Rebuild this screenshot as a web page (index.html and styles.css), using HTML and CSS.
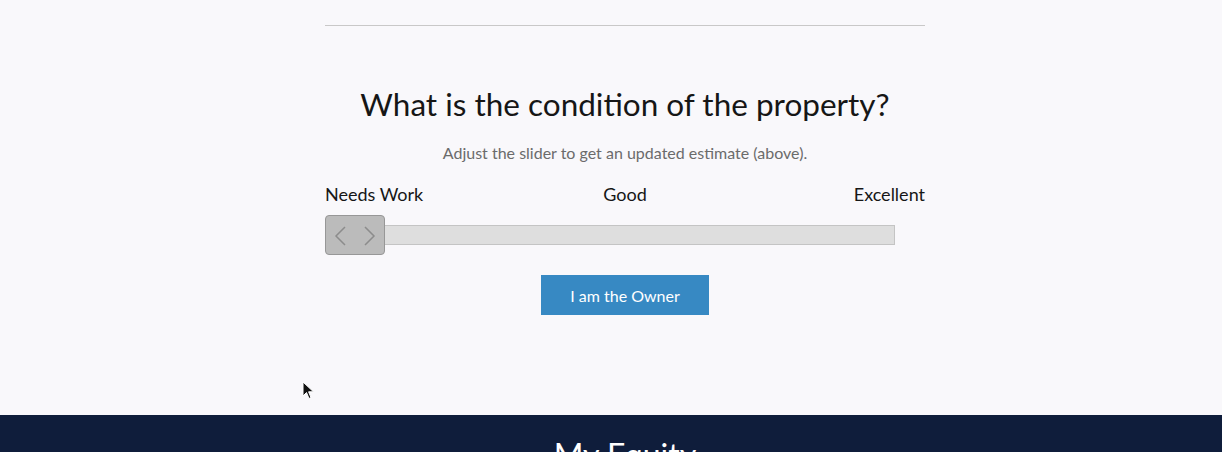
FILE: index.html
```html
<!DOCTYPE html>
<html>
<head>
	<title>Property condition</title>
	<link rel="stylesheet" href="styles.css">
</head>
<body>
	<div class="page">
		<div class="step">
			<hr class="divider">
			<h1>What is the condition of the property?</h1>
			<p class="hint">Adjust the slider to get an updated estimate (above).</p>
			<div class="labels">
				<span class="left">Needs Work</span>
				<span class="mid">Good</span>
				<span class="right">Excellent</span>
			</div>
			<div class="slider">
				<div class="track"></div>
				<div class="handle">
					<svg width="58" height="38" viewBox="0 0 58 38">
						<path d="M19 11 L10 20 L19 29" fill="none" stroke="#8c8c8c" stroke-width="1.5"/>
						<path d="M39 11 L48 20 L39 29" fill="none" stroke="#8c8c8c" stroke-width="1.5"/>
					</svg>
				</div>
			</div>
			<div class="actions">
				<button class="owner">I am the Owner</button>
			</div>
		</div>
	</div>
	<div class="footer">
		<h2>My Equity</h2>
	</div>
	<svg class="cursor" width="14" height="20" viewBox="0 0 14 20">
		<path d="M1 1 L1 15 L4.5 11.5 L7 17.5 L9 16.6 L6.6 10.8 L11.5 10.8 Z" fill="#111" stroke="#fff" stroke-width="1"/>
	</svg>
</body>
</html>
```

FILE: styles.css
```css
body {
	margin: 0;
	background-color: #f9f8fb;
	font-family: Lato, "Open Sans", sans-serif;
	overflow: hidden;
	height: 452px;
}

.page {
	padding-left: 28px;
	height: 415px;
}

.step {
	width: 600px;
	margin: 0 auto;
	padding-top: 25px;
}

.divider {
	border: none;
	border-top: 1px solid #c9c8c8;
	margin: 0;
}

h1 {
	font-weight: normal;
	font-size: 31.5px;
	color: #161616;
	text-align: center;
	margin: 0;
	padding-top: 58px;
	line-height: 40px;
}

.hint {
	text-align: center;
	color: #6b6b6b;
	font-size: 16px;
	margin: 0;
	padding-top: 19px;
	line-height: 20px;
}

.labels {
	display: grid;
	grid-template-columns: 1fr auto 1fr;
	font-size: 18px;
	color: #161616;
	padding-top: 20px;
	line-height: 22px;
}

.labels .right {
	text-align: right;
}

.slider {
	position: relative;
	margin-top: 10px;
	height: 40px;
	width: 570px;
	display: flex;
	align-items: center;
}

.track {
	flex: 1;
	height: 18px;
	background: #dedede;
	border: 1px solid #c4c4c4;
}

.handle {
	position: absolute;
	left: 0;
	top: 0;
	width: 58px;
	height: 38px;
	background: #bbbbbb;
	border: 1px solid #979797;
	border-radius: 4px;
}

.handle svg {
	display: block;
}

.actions {
	text-align: center;
	padding-top: 20px;
}

.owner {
	border: none;
	background: #3789c3;
	color: #fff;
	font-family: Lato, sans-serif;
	font-size: 16px;
	width: 168px;
	height: 40px;
	padding: 0;
}

.footer {
	background: #0f1d3b;
	height: 60px;
	padding-left: 28px;
	overflow: hidden;
}

.footer h2 {
	margin: 0;
	padding-top: 20px;
	text-align: center;
	color: #fff;
	font-weight: normal;
	font-size: 32px;
	line-height: 40px;
}

.cursor {
	position: absolute;
	left: 302px;
	top: 381px;
}
```
